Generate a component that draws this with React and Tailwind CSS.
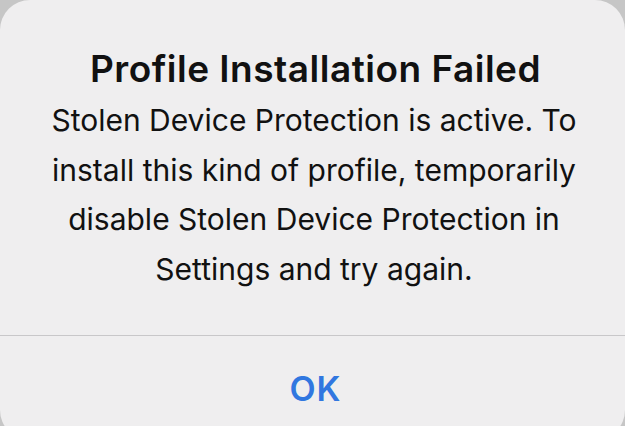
export default function App() {
  return (
    <div className="w-[625px] h-[426px] bg-[#c6c6c6] overflow-hidden" style={{ fontFamily: "Inter, 'Noto Sans', sans-serif" }}>
      <div className="w-[625px] h-[440px] bg-[#efeeef] rounded-[30px] flex flex-col">
        <div className="h-[335px] flex flex-col items-center pt-[47px] text-[#111111]">
          <div className="text-[37px] leading-[44px] font-semibold tracking-[0.5px] pl-[6px]">Profile Installation Failed</div>
          <div className="mt-[5px] text-[30px] leading-[49.5px] text-center pl-[3px]">
            Stolen Device Protection is active. To<br />
            install this kind of profile, temporarily<br />
            disable Stolen Device Protection in<br />
            Settings and try again.
          </div>
        </div>
        <div className="h-px bg-[#c8c7c9]" />
        <div className="h-[90px] flex items-center justify-center pt-[16px]">
          <span className="text-[34px] font-semibold text-[#3177e0] leading-none tracking-[1px] pl-[6px]">OK</span>
        </div>
      </div>
    </div>
  );
}
